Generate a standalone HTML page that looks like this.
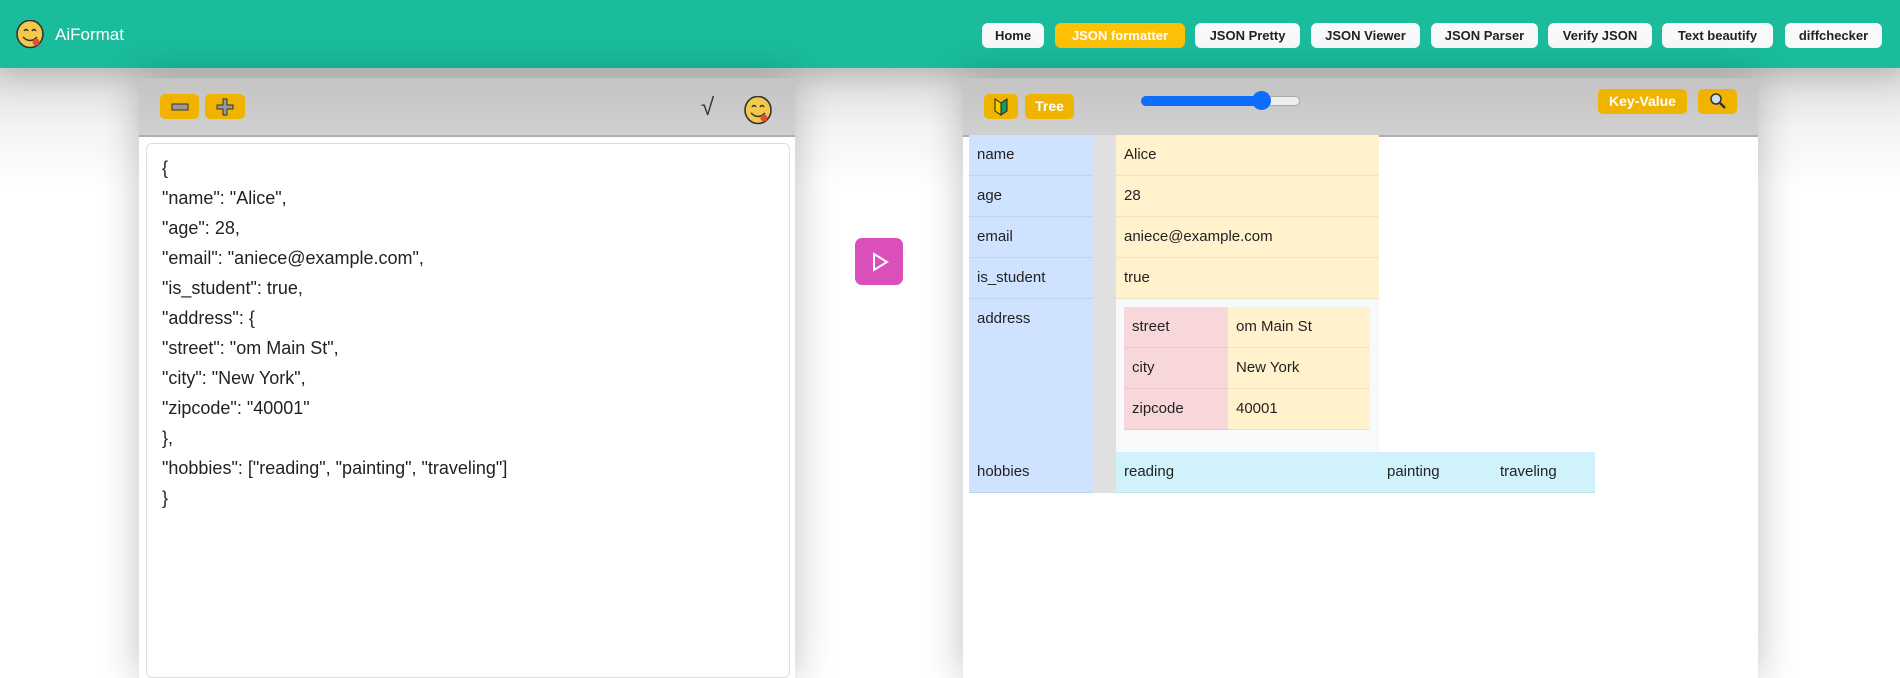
<!DOCTYPE html>
<html><head><meta charset="utf-8"><style>
*{box-sizing:border-box;margin:0;padding:0}
body{width:1900px;height:635px;overflow:hidden;background:#fff;font-family:"Liberation Sans",sans-serif;position:relative}
.hdr{position:absolute;left:0;top:0;width:1900px;height:68px;background:#1abc9c;box-shadow:0 6px 30px rgba(0,0,0,.18)}
.bgshade{position:absolute;left:0;top:68px;width:1900px;height:567px;background:linear-gradient(#dadada,#f4f4f4 60px,#fff 120px)}
.logo{position:absolute;left:16px;top:20px}
.brand{position:absolute;left:55px;top:25px;color:#fff;font-size:17px}
.nav{position:absolute;top:23px;height:25px;border-radius:6px;background:#f8f9fa;color:#222;font-weight:bold;font-size:13px;line-height:25px;text-align:center}
.nav.a{background:#ffc107;color:#fff}
.panel{position:absolute;top:78px;height:600px;background:#fff;border-radius:6px 6px 0 0;box-shadow:0 0 40px rgba(0,0,0,.25);overflow:hidden}
.tb{position:absolute;left:0;top:0;right:0;height:59px;background:linear-gradient(#c4c4c4,#d0d0d0);border-bottom:2px solid #b0b0b0}
.yb{position:absolute;height:25px;background:#f0b400;border-radius:5px;color:#fff;font-weight:bold;font-size:14px;line-height:25px;text-align:center}
.ta{position:absolute;left:7px;top:65px;right:5px;bottom:0;border:1px solid #ddd;border-radius:6px;padding:9px 0 0 15px;font-size:18px;line-height:30px;color:#222}
table{border-collapse:collapse;font-size:15px;color:#222}
td{padding:0 8px;vertical-align:top;line-height:40px}
.k{background:#cfe2ff;border-bottom:1px solid #c0d4f0}
.g{background:#e0e0e0;border-bottom:1px solid #e0e0e0}
.v{background:#fff2cc;border-bottom:1px solid #efe4c0}
.nk{background:#f8d7da;border-bottom:1px solid #e8c8cb}
.h{background:#cff2fb;border-bottom:1px solid #bfe2ea}
</style></head><body>
<div class="bgshade"></div>
<div class="hdr"></div>
<svg class="logo" width="30" height="30" viewBox="0 0 30 30"><ellipse cx="14" cy="14" rx="13" ry="13.5" fill="#f2c94c" stroke="#333" stroke-width="1.6"/><path d="M8 11q2-3 4 0M16 11q2-3 4 0" stroke="#333" fill="none" stroke-width="1.5"/><path d="M7 17q7 7 14 0" stroke="#333" fill="none" stroke-width="1.5"/><circle cx="20" cy="22" r="3.5" fill="#e0502a"/></svg>
<div class="brand">AiFormat</div>
<div class="nav" style="left:982px;width:62px">Home</div>
<div class="nav a" style="left:1055px;width:130px">JSON formatter</div>
<div class="nav" style="left:1195px;width:105px">JSON Pretty</div>
<div class="nav" style="left:1311px;width:109px">JSON Viewer</div>
<div class="nav" style="left:1431px;width:107px">JSON Parser</div>
<div class="nav" style="left:1548px;width:104px">Verify JSON</div>
<div class="nav" style="left:1662px;width:111px">Text beautify</div>
<div class="nav" style="left:1785px;width:97px">diffchecker</div>

<div class="panel" style="left:139px;width:656px">
 <div class="tb">
  <div class="yb" style="left:21px;top:16px;width:39px"><svg width="20" height="10" viewBox="0 0 20 10" style="margin-top:8px"><rect x="2" y="2" width="16" height="6" fill="#999" stroke="#333"/></svg></div>
  <div class="yb" style="left:66px;top:16px;width:40px"><svg width="20" height="20" viewBox="0 0 20 20" style="margin-top:3px"><path d="M8 2h4v6h6v4h-6v6h-4v-6h-6v-4h6z" fill="#999" stroke="#333"/></svg></div>
  <div style="position:absolute;left:562px;top:16px;font-size:24px;color:#333">√</div>
  <svg style="position:absolute;left:605px;top:18px" width="30" height="30" viewBox="0 0 30 30"><ellipse cx="14" cy="14" rx="13" ry="13.5" fill="#f2c94c" stroke="#333" stroke-width="1.6"/><path d="M8 11q2-3 4 0M16 11q2-3 4 0" stroke="#333" fill="none" stroke-width="1.5"/><path d="M7 17q7 7 14 0" stroke="#333" fill="none" stroke-width="1.5"/><circle cx="20" cy="22" r="3.5" fill="#e0502a"/></svg>
 </div>
 <div class="ta">{<br>"name": "Alice",<br>"age": 28,<br>"email": "aniece@example.com",<br>"is_student": true,<br>"address": {<br>"street": "om Main St",<br>"city": "New York",<br>"zipcode": "40001"<br>},<br>"hobbies": ["reading", "painting", "traveling"]<br>}</div>
</div>

<div style="position:absolute;left:855px;top:238px;width:48px;height:47px;border-radius:7px;background:#db4fbb"><svg width="48" height="47" viewBox="0 0 48 47"><path d="M19 16v16l13-8z" fill="none" stroke="#fff" stroke-width="2"/></svg></div>

<div class="panel" style="left:963px;width:795px">
 <div class="tb">
  <div class="yb" style="left:21px;top:16px;width:34px"><svg width="16" height="18" viewBox="0 0 16 18" style="margin-top:4px"><path d="M2 1l6 4v12l-6-4z" fill="#f0d000" stroke="#222"/><path d="M14 1l-6 4v12l6-4z" fill="#1a9a60" stroke="#222"/></svg></div>
  <div class="yb" style="left:62px;top:16px;width:49px">Tree</div>
  <div style="position:absolute;left:178px;top:18px;width:159px;height:10px;border-radius:5px;background:#eee;border:1px solid #aaa"></div>
  <div style="position:absolute;left:178px;top:18px;width:121px;height:10px;border-radius:5px;background:#0d6efd"></div>
  <div style="position:absolute;left:289px;top:13px;width:19px;height:19px;border-radius:50%;background:#0d6efd"></div>
  <div class="yb" style="left:635px;top:11px;width:89px">Key-Value</div>
  <div class="yb" style="left:735px;top:11px;width:39px"><svg width="18" height="18" viewBox="0 0 18 18" style="margin-top:3px"><circle cx="7" cy="7" r="5" fill="#cde" stroke="#333" stroke-width="1.5"/><path d="M11 11l5 5" stroke="#333" stroke-width="2.5"/></svg></div>
 </div>
 <table style="position:absolute;left:6px;top:57px">
  <tr><td class="k" style="width:124px">name</td><td class="g" style="width:23px;padding:0"></td><td class="v" style="width:263px">Alice</td></tr>
  <tr><td class="k">age</td><td class="g" style="padding:0"></td><td class="v">28</td></tr>
  <tr><td class="k">email</td><td class="g" style="padding:0"></td><td class="v">aniece@example.com</td></tr>
  <tr><td class="k">is_student</td><td class="g" style="padding:0"></td><td class="v">true</td></tr>
  <tr><td class="k" style="height:154px">address</td><td class="g" style="padding:0"></td><td style="background:#f8f9fa;padding:8px 8px 0 8px;border-bottom:1px solid #eee">
   <table><tr><td class="nk" style="width:104px">street</td><td class="v" style="width:142px">om Main St</td></tr>
   <tr><td class="nk">city</td><td class="v">New York</td></tr>
   <tr><td class="nk">zipcode</td><td class="v">40001</td></tr></table></td></tr>
 </table>
 <table style="position:absolute;left:6px;top:374px">
  <tr><td class="k" style="width:124px">hobbies</td><td class="g" style="width:23px;padding:0"></td><td class="h" style="width:263px">reading</td><td class="h" style="width:113px">painting</td><td class="h" style="width:103px">traveling</td></tr>
 </table>
</div>
</body></html>
